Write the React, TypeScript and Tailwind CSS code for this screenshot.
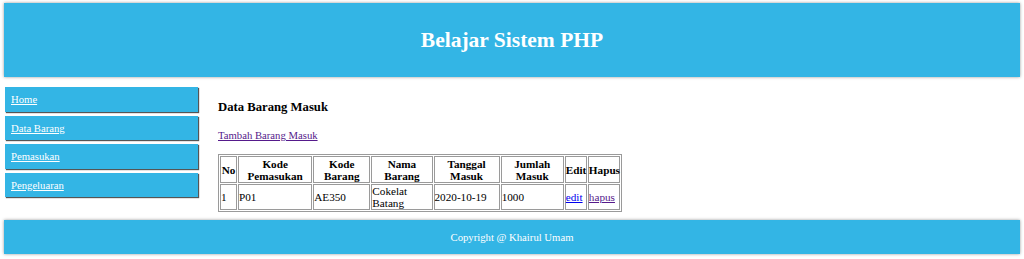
export default function App() {
  const menu = ["Home", "Data Barang", "Pemasukan", "Pengeluaran"];
  const th = "border border-[#9a9a9a] px-0 py-[0.5px] font-bold text-center align-middle leading-[12px]";
  const td = "border border-[#9a9a9a] px-0 py-0 align-middle leading-[12px]";
  const cols = ["w-[17px]", "w-[74px]", "w-[57px]", "w-[61px]", "w-[66px]", "w-[63px]", "w-[22px]", "w-[32px]"];

  return (
    <div className="min-h-[259px] bg-white pt-[3px] font-['Liberation_Serif',serif] text-[10.7px] text-black">
      {/* header */}
      <div className="mx-[4px] flex h-[74px] items-center justify-center bg-[#33b5e5] shadow-[0_0_3px_#9a9a9a]">
        <h1 className="text-[21.5px] font-bold text-white">Belajar Sistem PHP</h1>
      </div>

      <div className="mt-[10px] flex h-[133px]">
        {/* sidebar */}
        <div className="ml-[5px] flex w-[193px] flex-col gap-[4px]">
          {menu.map((m) => (
            <div
              key={m}
              className="flex h-[24.5px] items-center bg-[#33b5e5] pl-[6px] shadow-[1px_1px_1px_#555]"
            >
              <a href="#" className="text-white underline">
                {m}
              </a>
            </div>
          ))}
        </div>

        {/* content */}
        <div className="ml-[20px] pt-[12px]">
          <h3 className="text-[12.7px] font-bold leading-[16px]">Data Barang Masuk</h3>
          <a href="#" className="mt-[13px] block leading-[15px] text-[#551a8b] underline">
            Tambah Barang Masuk
          </a>
          <table className="mt-[11px] w-[404px] table-fixed border-separate border-spacing-[1px] border border-[#9a9a9a] text-[11.2px]">
            <colgroup>
              {cols.map((c, i) => (
                <col key={i} className={c} />
              ))}
            </colgroup>
            <thead>
              <tr>
                <th className={th}>No</th>
                <th className={th}>
                  Kode
                  <br />
                  Pemasukan
                </th>
                <th className={th}>
                  Kode
                  <br />
                  Barang
                </th>
                <th className={th}>
                  Nama
                  <br />
                  Barang
                </th>
                <th className={th}>
                  Tanggal
                  <br />
                  Masuk
                </th>
                <th className={th}>
                  Jumlah
                  <br />
                  Masuk
                </th>
                <th className={th}>Edit</th>
                <th className={th}>Hapus</th>
              </tr>
            </thead>
            <tbody>
              <tr>
                <td className={td}>1</td>
                <td className={td}>P01</td>
                <td className={td}>AE350</td>
                <td className={td}>
                  Cokelat
                  <br />
                  Batang
                </td>
                <td className={td}>2020-10-19</td>
                <td className={td}>1000</td>
                <td className={td}>
                  <a href="#" className="text-[#0000ee] underline">
                    edit
                  </a>
                </td>
                <td className={td}>
                  <a href="#" className="text-[#551a8b] underline">
                    hapus
                  </a>
                </td>
              </tr>
            </tbody>
          </table>
        </div>
      </div>

      {/* footer */}
      <div className="mx-[4px] flex h-[34px] items-center justify-center bg-[#33b5e5] shadow-[0_0_3px_#9a9a9a]">
        <p className="text-white">Copyright @ Khairul Umam</p>
      </div>
    </div>
  );
}
